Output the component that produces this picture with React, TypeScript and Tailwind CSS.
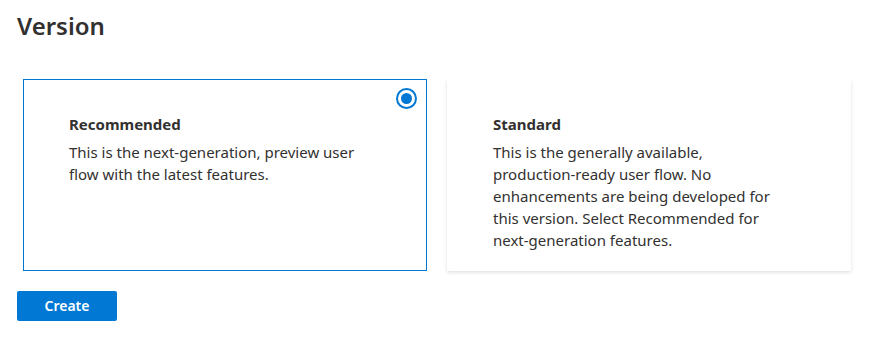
export default function App() {
  return (
    <div
      className="min-h-screen bg-white pl-[17px] pt-[10px] text-[#323130]"
      style={{ fontFamily: '"Segoe UI", "Noto Sans", sans-serif' }}
    >
      <h1 className="text-[24px] font-semibold leading-[32px]">Version</h1>
      <div className="mt-[37px] flex gap-[20px] pl-[6px]">
        <VersionCard
          selected
          title="Recommended"
          text="This is the next-generation, preview user flow with the latest features."
        />
        <VersionCard
          title="Standard"
          text="This is the generally available, production-ready user flow. No enhancements are being developed for this version. Select Recommended for next-generation features."
        />
      </div>
      <button className="mt-[20px] h-[30px] w-[100px] rounded-[2px] bg-[#0078d4] text-[14px] font-semibold leading-[30px] text-white">
        Create
      </button>
    </div>
  );
}

function VersionCard({ title, text, selected }: { title: string; text: string; selected?: boolean }) {
  return (
    <div
      className={
        selected
          ? "relative h-[192px] w-[404px] border border-[#0078d4] bg-white px-[45px] pt-[34px]"
          : "relative h-[192px] w-[404px] border border-transparent bg-white px-[45px] pt-[34px] shadow-[0_1.6px_3.6px_rgba(0,0,0,0.13),0_0.3px_0.9px_rgba(0,0,0,0.11)]"
      }
    >
      {selected && (
        <span className="absolute right-[9px] top-[8px] flex h-[21px] w-[21px] items-center justify-center rounded-full border-2 border-[#0078d4]">
          <span className="h-[11px] w-[11px] rounded-full bg-[#0078d4]" />
        </span>
      )}
      <div className="text-[15px] font-bold leading-[20px]">{title}</div>
      <p className="mt-[7px] max-w-[290px] text-[15px] leading-[22px]">{text}</p>
    </div>
  );
}
